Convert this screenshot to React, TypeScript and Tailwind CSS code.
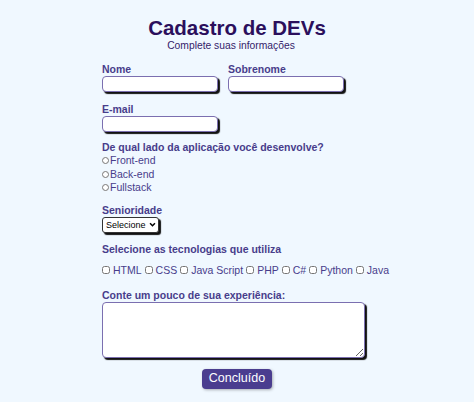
import React from 'react'

const techs = ['HTML', 'CSS', 'Java Script', 'PHP', 'C#', 'Python', 'Java']
const sides = ['Front-end', 'Back-end', 'Fullstack']

const inputClass =
    'h-[16px] w-[116px] rounded-[4px] border border-[#7b6fb0] bg-white shadow-[2px_2px_1px_#111] outline-none'

export default function App() {
    return (
        <div className="min-h-[402px] w-full bg-[#f0f8ff] font-['Liberation_Sans',Arial,sans-serif] text-[#483d8b]">
            <div className="flex flex-col items-center pt-[16px]">
                <h1 className="text-[20.5px] leading-[24px] font-bold text-[#2b0f5c]">
                    Cadastro de DEVs
                </h1>
                <p className="mr-[12px] text-[10.3px] leading-[12px] text-[#35226a]">
                    Complete suas informações
                </p>
            </div>

            <form className="ml-[102px] mt-[10px] flex flex-col text-[10.5px]">
                <div className="flex gap-[10px]">
                    <div className="flex flex-col">
                        <label className="font-bold leading-[14px]">Nome</label>
                        <input type="text" className={inputClass} />
                    </div>
                    <div className="flex flex-col">
                        <label className="font-bold leading-[14px]">Sobrenome</label>
                        <input type="text" className={inputClass} />
                    </div>
                </div>

                <div className="mt-[10px] flex flex-col">
                    <label className="font-bold leading-[14px]">E-mail</label>
                    <input type="email" className={inputClass} />
                </div>

                <div className="mt-[8px] flex flex-col">
                    <span className="font-bold leading-[14px]">
                        De qual lado da aplicação você desenvolve?
                    </span>
                    {sides.map((side) => (
                        <label key={side} className="flex h-[13.5px] items-center leading-[13px]">
                            <input
                                type="radio"
                                name="lado"
                                className="m-0 mr-[1px] h-[7px] w-[7px]"
                            />
                            {side}
                        </label>
                    ))}
                </div>

                <div className="mt-[8px] flex flex-col items-start">
                    <label className="font-bold leading-[14px]">Senioridade</label>
                    <div className="relative">
                        <select className="h-[16px] w-[57px] appearance-none rounded-[3px] border border-[#333] bg-white pl-[3px] text-[9px] leading-[14px] text-black shadow-[2px_2px_1px_#111] outline-none">
                            <option>Selecione</option>
                            <option>Júnior</option>
                            <option>Pleno</option>
                            <option>Sênior</option>
                        </select>
                        <svg
                            viewBox="0 0 10 10"
                            className="pointer-events-none absolute right-[3px] top-[4.5px] h-[7px] w-[7px]"
                        >
                            <path
                                d="M1.5 3.2 L5 6.7 L8.5 3.2"
                                fill="none"
                                stroke="#000"
                                strokeWidth="2.2"
                            />
                        </svg>
                    </div>
                </div>

                <span className="mt-[9px] font-bold leading-[14px]">
                    Selecione as tecnologias que utiliza
                </span>
                <div className="mt-[8px] flex items-center gap-[3px] whitespace-nowrap leading-[13px]">
                    {techs.map((t) => (
                        <label key={t} className="flex items-center gap-[3px]">
                            <input type="checkbox" className="m-0 h-[8px] w-[8px]" />
                            {t}
                        </label>
                    ))}
                </div>

                <label className="mt-[11px] font-bold leading-[14px]">
                    Conte um pouco de sua experiência:
                </label>
                <textarea className="h-[56px] w-[263px] rounded-[4px] border border-[#7b6fb0] bg-white shadow-[2px_2px_1px_#111] outline-none" />

                <div className="mt-[11px] flex w-[270px] justify-center">
                    <button
                        type="button"
                        className="h-[20px] w-[70px] rounded-[4px] bg-[#4a3d8f] text-[12.5px] text-white shadow-[1px_1px_3px_rgba(0,0,0,0.3)]"
                    >
                        Concluído
                    </button>
                </div>
            </form>
        </div>
    )
}
